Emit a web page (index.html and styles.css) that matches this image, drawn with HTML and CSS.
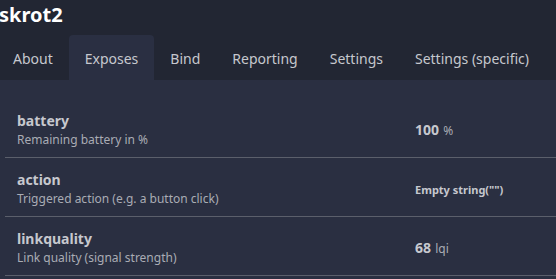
FILE: index.html
```html
<!DOCTYPE html>
<html>
<head>
    <title>skrot2</title>
    <link rel="stylesheet" href="styles.css">
</head>
<body>
    <div class="page">
        <h1 class="title">skrot2</h1>
        <ul class="tabs">
            <li class="tab">About</li>
            <li class="tab active">Exposes</li>
            <li class="tab">Bind</li>
            <li class="tab">Reporting</li>
            <li class="tab">Settings</li>
            <li class="tab">Settings (specific)</li>
        </ul>
    </div>

    <div class="content">
        <table class="exposes">
            <tr>
                <td class="name-cell">
                    <div class="name">battery</div>
                    <div class="desc">Remaining battery in %</div>
                </td>
                <td class="value-cell"><span class="value">100</span> <span class="unit">%</span></td>
            </tr>
            <tr>
                <td class="name-cell">
                    <div class="name">action</div>
                    <div class="desc">Triggered action (e.g. a button click)</div>
                </td>
                <td class="value-cell"><span class="value small">Empty string("")</span></td>
            </tr>
            <tr>
                <td class="name-cell">
                    <div class="name">linkquality</div>
                    <div class="desc">Link quality (signal strength)</div>
                </td>
                <td class="value-cell"><span class="value">68</span> <span class="unit">lqi</span></td>
            </tr>
        </table>
    </div>
</body>
</html>
```

FILE: styles.css
```css
html, body { margin: 0; padding: 0; }
body { font-family: "Noto Sans", "Open Sans", sans-serif; background: #2a2f41; color: #c6c8ce; overflow: hidden; }

.page { background: #222633; margin-left: -3px; }
.title { margin: 0; padding: 0 0 0 2px; height: 35px; font-size: 20px; line-height: 29px; font-weight: 700; color: #ffffff; }

.tabs { list-style: none; margin: 0; padding: 0; display: flex; height: 45px; white-space: nowrap; }
.tab { flex-shrink: 0; padding: 0 16px; line-height: 47px; font-size: 14px; color: #c6c8ce; border-radius: 4px 4px 0 0; }
.tab.active { background: #2a2f42; }

.content { padding: 19px 0 0 5px; }
table.exposes { width: 100%; border-collapse: collapse; }
.exposes td { padding: 2px 12px 0; height: 56px; border-bottom: 1px solid #5b5f6b; vertical-align: middle; }
.name-cell { width: 374px; }
.name { font-size: 14px; font-weight: 700; color: #c6c8ce; line-height: 21px; }
.desc { font-size: 12px; color: #a9acb4; line-height: 18px; }
.value { font-size: 14px; font-weight: 700; color: #c6c8ce; }
.value.small { font-size: 11px; }
.unit { font-size: 12px; color: #a9acb4; }
```
